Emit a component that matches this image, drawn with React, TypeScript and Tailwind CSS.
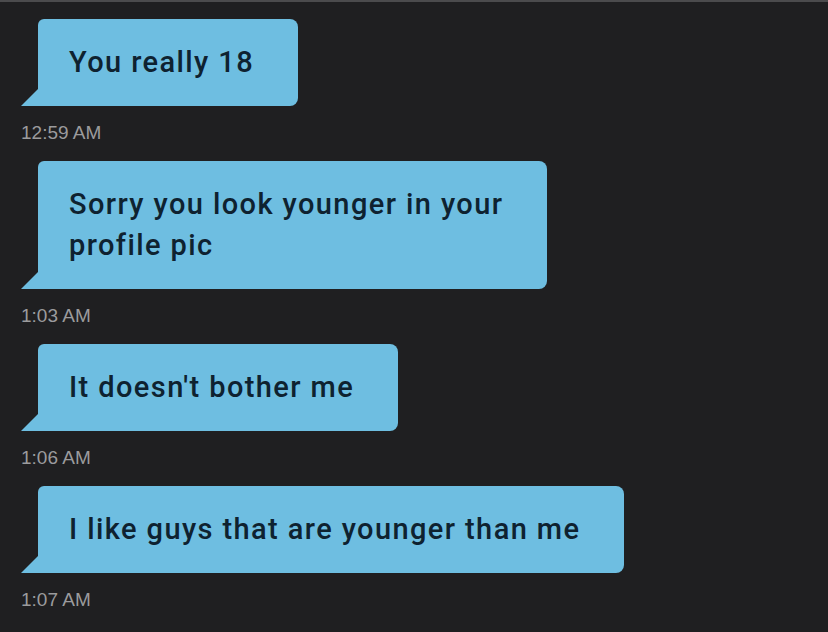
import React from "react";

type Message = {
  id: number;
  lines: string[];
  time: string;
};

const MESSAGES: Message[] = [
  { id: 1, lines: ["You really 18"], time: "12:59 AM" },
  { id: 2, lines: ["Sorry you look younger in your", "profile pic"], time: "1:03 AM" },
  { id: 3, lines: ["It doesn't bother me"], time: "1:06 AM" },
  { id: 4, lines: ["I like guys that are younger than me"], time: "1:07 AM" },
];

function Bubble({ lines }: { lines: string[] }) {
  return (
    <div className="relative ml-[38px] w-fit rounded-[8px] rounded-tl-[6px] rounded-bl-none bg-[#6ebee1] py-[23px] pl-[31px] pr-[44px]">
      {/* tail */}
      <svg
        className="absolute bottom-0 left-[-17px]"
        width="18"
        height="18"
        viewBox="0 0 18 18"
        aria-hidden
      >
        <polygon points="18,0 18,18 0,18" fill="#6ebee1" />
      </svg>
      {lines.map((line) => (
        <p
          key={line}
          className="whitespace-nowrap text-[29px] font-medium leading-[41px] tracking-[1.4px] text-[#0e2230] [font-family:Roboto,'Noto_Sans',sans-serif]"
        >
          {line}
        </p>
      ))}
    </div>
  );
}

export default function App() {
  return (
    <div className="min-h-[632px] w-full border-t-2 border-[#4b4b4d] bg-[#1f1f21] pt-[17px]">
      <div className="flex flex-col">
        {MESSAGES.map((m, i) => (
          <div key={m.id} className={i === 0 ? "" : "mt-[17px]"}>
            <Bubble lines={m.lines} />
            <div className="mt-[16px] h-[22px] pl-[21px] text-[19px] leading-[22px] text-[#9b9b9d] [font-family:'Liberation_Sans',Arial,sans-serif]">
              {m.time}
            </div>
          </div>
        ))}
      </div>
    </div>
  );
}
